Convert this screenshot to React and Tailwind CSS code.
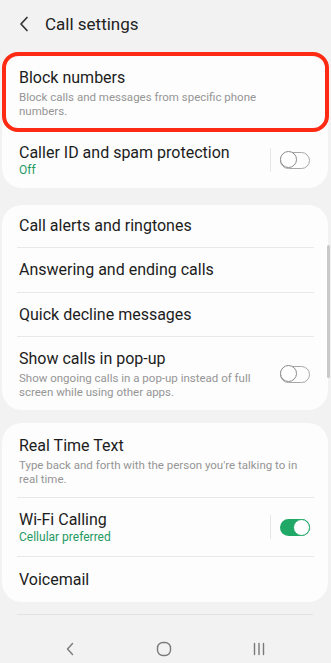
import React from "react";

function Toggle({ on }) {
  if (on) {
    return (
      <div className="relative h-[17px] w-[30px] rounded-full bg-[#20a866]">
        <div className="absolute right-0 top-0 h-[17px] w-[17px] rounded-full border-[1.5px] border-[#20a866] bg-white" />
      </div>
    );
  }
  return (
    <div className="relative h-[17px] w-[30px] rounded-full border-[1.5px] border-[#a8a8a8]">
      <div className="absolute left-[-1.5px] top-[-1.5px] h-[17px] w-[17px] rounded-full border-[1.5px] border-[#8a8a8a] bg-white" />
    </div>
  );
}

function Divider() {
  return <div className="ml-[15px] mr-[14px] h-px bg-[#e8e8e8]" />;
}

function Row({ title, sub, subColor = "gray", subPr = "", toggle, vline, pt = "pt-[12px]", pb = "pb-[12px]" }) {
  return (
    <div className={`flex items-center pl-[17px] pr-[18px] ${pt} ${pb}`}>
      <div className="flex-1 min-w-0">
        <div className="text-[16px] leading-[20px] text-[#1c1c1c]">{title}</div>
        {sub && (
          <div
            className={
              subColor === "green"
                ? "text-[12px] leading-[14px] text-[#1f9a62]"
                : `mt-[3px] text-[11.5px] leading-[13.5px] text-[#959595] ${subPr}`
            }
          >
            {sub}
          </div>
        )}
      </div>
      {toggle !== undefined && (
        <div className="ml-[8px] flex items-center">
          {vline && <div className="mr-[9px] h-[24px] w-px bg-[#e6e6e6]" />}
          <Toggle on={toggle} />
        </div>
      )}
    </div>
  );
}

export default function App() {
  return (
    <div
      className="relative flex h-[663px] w-[331px] flex-col overflow-hidden bg-[#f2f2f2]"
      style={{ fontFamily: "Roboto, 'Noto Sans', sans-serif" }}
    >
      {/* Header */}
      <div className="flex h-[48px] items-center pl-[19px]">
        <svg width="10" height="16" viewBox="0 0 10 16">
          <path d="M8 1.5 L2 8 L8 14.5" fill="none" stroke="#333" strokeWidth="1.7" strokeLinecap="round" strokeLinejoin="round" />
        </svg>
        <div className="ml-[16px] text-[17px] leading-[22px] text-[#222]">Call settings</div>
      </div>

      {/* Card 1 */}
      <div className="relative ml-[2px] mr-[3px] mt-[8px] rounded-[20px] bg-[#fdfdfd]">
        <Row
          title="Block numbers"
          sub="Block calls and messages from specific phone numbers."
          subPr="pr-[30px]"
          pt="pt-[12px]"
          pb="pb-[14px]"
        />
        <Row
          title="Caller ID and spam protection"
          sub="Off"
          subColor="green"
          toggle={false}
          vline
          pt="pt-[11px]"
          pb="pb-[11px]"
        />
        <div className="pointer-events-none absolute left-0 right-[-1px] top-[-4px] h-[80px] rounded-[16px] border-[4.5px] border-[#ff2a14]" />
      </div>

      {/* Card 2 */}
      <div className="ml-[2px] mr-[3px] mt-[17px] rounded-[20px] bg-[#fdfdfd]">
        <Row title="Call alerts and ringtones" pt="pt-[11px]" pb="pb-[11px]" />
        <Divider />
        <Row title="Answering and ending calls" pt="pt-[12px]" pb="pb-[12px]" />
        <Divider />
        <Row title="Quick decline messages" pt="pt-[12px]" pb="pb-[11px]" />
        <Divider />
        <Row
          title="Show calls in pop-up"
          sub="Show ongoing calls in a pop-up instead of full screen while using other apps."
          toggle={false}
          pt="pt-[12px]"
          pb="pb-[11px]"
        />
      </div>

      {/* Card 3 */}
      <div className="ml-[2px] mr-[3px] mt-[13px] rounded-[20px] bg-[#fdfdfd]">
        <Row
          title="Real Time Text"
          sub="Type back and forth with the person you're talking to in real time."
          pt="pt-[13px]"
          pb="pb-[11px]"
        />
        <Divider />
        <Row
          title="Wi-Fi Calling"
          sub="Cellular preferred"
          subColor="green"
          toggle={true}
          vline
          pt="pt-[12px]"
          pb="pb-[12px]"
        />
        <Divider />
        <Row title="Voicemail" pt="pt-[13px]" pb="pb-[12px]" />
      </div>

      <div className="ml-[17px] mr-[18px] mt-[12px] h-px bg-[#e2e2e2]" />

      {/* Nav bar */}
      <div className="flex flex-1 items-center justify-between px-[65px] pt-[20px]">
        <svg width="10" height="14" viewBox="0 0 10 14">
          <path d="M7.5 1.5 L2.5 7 L7.5 12.5" fill="none" stroke="#7a7a7a" strokeWidth="1.4" strokeLinecap="round" strokeLinejoin="round" />
        </svg>
        <svg width="16" height="16" viewBox="0 0 16 16">
          <rect x="1.5" y="1.5" width="13" height="13" rx="5.5" fill="none" stroke="#7a7a7a" strokeWidth="1.4" />
        </svg>
        <svg width="14" height="14" viewBox="0 0 14 14">
          <path d="M2.5 1.5 V12.5 M7 1.5 V12.5 M11.5 1.5 V12.5" fill="none" stroke="#7a7a7a" strokeWidth="1.4" strokeLinecap="round" />
        </svg>
      </div>

      {/* scrollbar */}
      <div className="pointer-events-none absolute right-[1px] top-[245px] h-[133px] w-[3px] rounded-full bg-[#c9c9c9]" />
    </div>
  );
}
